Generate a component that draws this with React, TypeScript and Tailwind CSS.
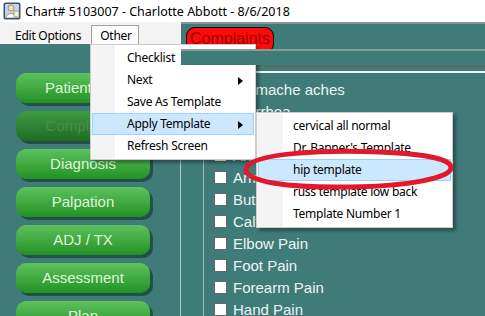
import React from "react";

const ui = { fontFamily: '"Noto Sans", "Open Sans", sans-serif' };
const arial = { fontFamily: '"Liberation Sans", Arial, sans-serif' };

const navButtons = [
  { label: "Patient Info", disabled: false },
  { label: "Complaints", disabled: true },
  { label: "Diagnosis", disabled: false },
  { label: "Palpation", disabled: false },
  { label: "ADJ / TX", disabled: false },
  { label: "Assessment", disabled: false },
  { label: "Plan", disabled: false },
];

const complaints = [
  "Stomache aches",
  "Diarrhea",
  "Abdominal Pain",
  "Ankle Pain",
  "Arm Pain",
  "Buttock Pain",
  "Calf Pain",
  "Elbow Pain",
  "Foot Pain",
  "Forearm Pain",
  "Hand Pain",
];

const otherItems = [
  { label: "Checklist" },
  { label: "Next", sub: true },
  { label: "Save As Template" },
  { label: "Apply Template", sub: true, active: true },
  { label: "Refresh Screen" },
];

const templates = [
  "cervical all normal",
  "Dr. Banner's Template",
  "hip template",
  "russ template low back",
  "Template Number 1",
];

function AppIcon() {
  return (
    <svg width="18" height="18" viewBox="0 0 18 18" className="shrink-0">
      <rect x="0.5" y="0.5" width="17" height="17" rx="2" fill="#3a4f7a" />
      <rect x="2" y="2" width="14" height="14" rx="1" fill="#c9d3e6" />
      <circle cx="8" cy="6" r="3" fill="#f3e2b0" stroke="#7a6a3a" strokeWidth="0.6" />
      <path d="M3 16 C3 10 13 10 13 16 Z" fill="#ffffff" stroke="#6a6a6a" strokeWidth="0.6" />
      <rect x="11" y="9" width="5" height="6" fill="#f5f0d8" stroke="#8a7a40" strokeWidth="0.6" />
    </svg>
  );
}

function Arrow() {
  return (
    <svg width="5" height="8" viewBox="0 0 5 8" className="absolute right-[10px] top-[7px]">
      <path d="M0 0 L5 4 L0 8 Z" fill="#000" />
    </svg>
  );
}

export default function App() {
  return (
    <div className="relative w-[485px] h-[316px] overflow-hidden bg-white" style={ui}>
      {/* title bar */}
      <div className="flex h-[22px] shrink-0 items-center gap-[4px] pl-[3px] bg-white">
        <AppIcon />
        <span className="text-[12.5px] text-black leading-none pt-[2px]">
          Chart# 5103007 - Charlotte Abbott - 8/6/2018
        </span>
      </div>

      <div className="flex h-[294px] overflow-hidden">
        {/* left column */}
        <div className="flex w-[181px] shrink-0 flex-col">
          <div className="flex h-[22px] shrink-0 items-end bg-[#f3f3f3] text-[12px] leading-[14px] text-black tracking-[-0.25px]">
            <span className="px-[15px] pb-[1px]">Edit Options</span>
            <span className="ml-[-5px] h-[19px] w-[48px] border border-b-0 border-[#a0a0a0] bg-[#fcfcfc] pl-[8px] pt-[3px]">
              Other
            </span>
          </div>
          <div className="flex min-h-0 flex-1 flex-col gap-[8px] overflow-hidden border-r border-[#b8c4c4] bg-[#3e7b79] pl-[16px] pt-[29px]" style={arial}>
            {navButtons.map((b) => (
              <div
                key={b.label}
                className={
                  b.disabled
                    ? "flex h-[30px] w-[134px] shrink-0 items-center justify-center rounded-[10px] bg-gradient-to-b from-[#3f9a42] to-[#1c6d22] text-[15px] text-[#4f8a52] shadow-[3px_3px_0_#244f47]"
                    : "flex h-[30px] w-[134px] shrink-0 items-center justify-center rounded-[10px] bg-gradient-to-b from-[#5cc25c] to-[#1f9223] text-[15px] text-[#dff6d8] shadow-[3px_3px_0_#244f47]"
                }
              >
                {b.label}
              </div>
            ))}
          </div>
        </div>

        {/* right column: tab control */}
        <div className="flex min-w-0 flex-1 flex-col bg-[#3e7b79]">
          <div className="h-[2px] shrink-0 bg-[#8c9494]" />
          <div className="flex h-[25px] shrink-0 items-end pl-[5px]">
            <div
              className="mb-[-4px] flex h-[26px] w-[88px] items-start justify-center rounded-[9px] border border-black bg-[#ff0a0a] pt-[2px] text-[16px] leading-[18px] text-[#9a0000]"
              style={arial}
            >
              Complaints
            </div>
          </div>
          <div className="relative z-10 h-[2px] shrink-0 bg-[#8a9a99]" />
          <div className="relative z-10 h-[14px] shrink-0 bg-[#3e7b79]" />
          <div className="h-[2px] shrink-0 bg-[#5a6a6a]" />
          <div className="h-[4px] shrink-0" />
          <div className="h-[2px] shrink-0 bg-[#f2f2f2]" />
          <div className="flex min-h-0 flex-1 overflow-hidden">
            <div className="w-[22px] shrink-0" />
            <div className="flex flex-1 flex-col border-l border-[#a9baba] pl-[10px] pt-[5px]" style={arial}>
              {complaints.map((c) => (
                <div key={c} className="flex h-[22px] shrink-0 items-center gap-[6px]">
                  <span className="h-[13px] w-[13px] shrink-0 border border-[#666] bg-white" />
                  <span className="text-[15px] text-[#eef4f4] leading-none">{c}</span>
                </div>
              ))}
            </div>
          </div>
        </div>
      </div>

      {/* Other menu */}
      <div className="absolute left-[90px] top-[44px] w-[166px] border border-[#cccccc] bg-white py-[2px] text-[12px] text-black tracking-[-0.25px] shadow-[3px_3px_3px_rgba(0,0,0,0.35)]">
        <div className="absolute bottom-0 left-0 top-0 w-[24px] bg-[#f4f4f4]" />
        {otherItems.map((it) => (
          <div
            key={it.label}
            className={
              it.active
                ? "relative mx-[1px] flex h-[22px] items-center border border-[#99d1ff] bg-[#cce8ff] pl-[34px]"
                : "relative mx-[1px] flex h-[22px] items-center border border-transparent pl-[34px]"
            }
          >
            {it.label}
            {it.sub && <Arrow />}
          </div>
        ))}
      </div>

      {/* Apply Template submenu */}
      <div className="absolute left-[256px] top-[112px] w-[197px] border border-[#cccccc] bg-white py-[2px] text-[12px] text-black tracking-[-0.25px] shadow-[3px_3px_3px_rgba(0,0,0,0.35)]">
        <div className="absolute bottom-0 left-0 top-0 w-[26px] bg-[#f4f4f4]" />
        {templates.map((t) => (
          <div
            key={t}
            className={
              t === "hip template"
                ? "relative mx-[1px] flex h-[22px] items-center border border-[#99d1ff] bg-[#cce8ff] pl-[34px]"
                : "relative mx-[1px] flex h-[22px] items-center border border-transparent pl-[34px]"
            }
          >
            {t}
          </div>
        ))}
      </div>

      {/* hand-drawn highlight ellipse */}
      <svg className="pointer-events-none absolute left-0 top-0" width="485" height="316">
        <path
          d="M246 169 C250 152 330 150 380 152 C430 154 452 160 451 168 C450 178 410 186 350 187 C290 188 244 182 246 169 Z"
          fill="none"
          stroke="#e3182b"
          strokeWidth="5"
        />
      </svg>
    </div>
  );
}
